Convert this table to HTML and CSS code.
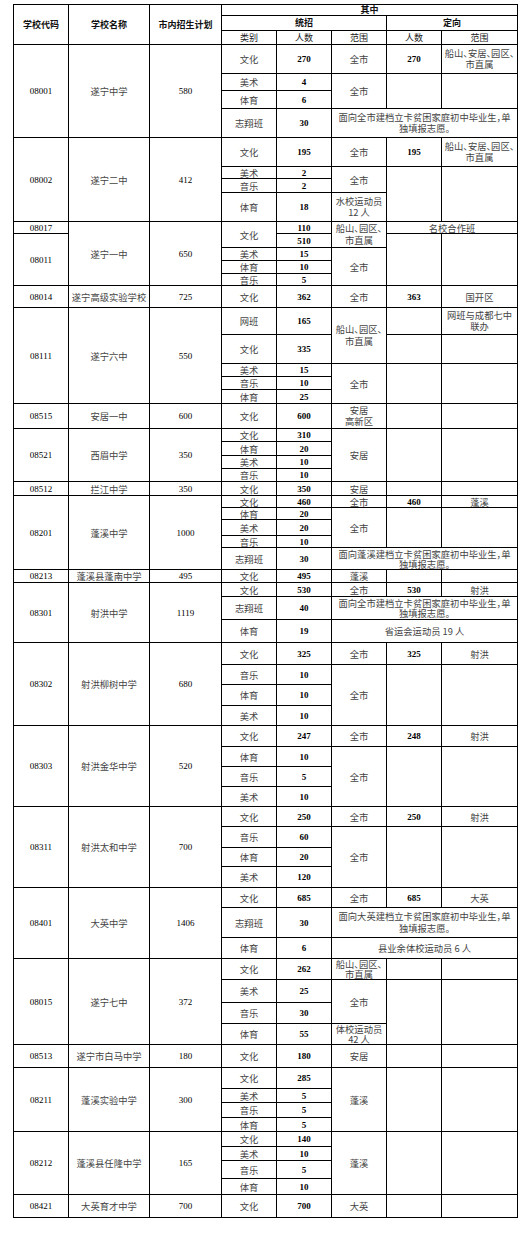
FILE: index.html
```html
<!DOCTYPE html>
<html lang="zh">
<head>
<meta charset="utf-8">
<title>市内招生计划</title>
<link rel="stylesheet" href="styles.css">
</head>
<body>
<table class="plan">
<colgroup>
<col class="w1"><col class="w2"><col class="w3"><col class="w4"><col class="w5"><col class="w6"><col class="w7"><col class="w8">
</colgroup>
<thead>
<tr class="h11"><th rowspan="3">学校代码</th><th rowspan="3">学校名称</th><th rowspan="3">市内招生计划</th><th colspan="5">其中</th></tr>
<tr class="h15"><th colspan="3">统招</th><th colspan="2">定向</th></tr>
<tr class="h14"><th class="sub">类别</th><th class="sub">人数</th><th class="sub">范围</th><th class="sub">人数</th><th class="sub">范围</th></tr>
</thead>
<tbody>
<tr class="h29"><td rowspan="4" class="c">08001</td><td rowspan="4">遂宁中学</td><td rowspan="4" class="c">580</td><td>文化</td><td class="n">270</td><td>全市</td><td class="n">270</td><td class="wrap">船山、安居、园区、市直属</td></tr>
<tr class="h17"><td>美术</td><td class="n">4</td><td rowspan="2">全市</td><td rowspan="2"></td><td rowspan="2"></td></tr>
<tr class="h18"><td>体育</td><td class="n">6</td></tr>
<tr class="h29"><td>志翔班</td><td class="n">30</td><td colspan="3" class="wrap pad4">面向全市建档立卡贫困家庭初中毕业生，单独填报志愿。</td></tr>

<tr class="h29"><td rowspan="4" class="c">08002</td><td rowspan="4">遂宁二中</td><td rowspan="4" class="c">412</td><td>文化</td><td class="n">195</td><td>全市</td><td class="n">195</td><td class="wrap">船山、安居、园区、市直属</td></tr>
<tr class="h12"><td>美术</td><td class="n">2</td><td rowspan="2">全市</td><td rowspan="3"></td><td rowspan="3"></td></tr>
<tr class="h14"><td>音乐</td><td class="n">2</td></tr>
<tr class="h29"><td>体育</td><td class="n">18</td><td class="wrap">水校运动员12 人</td></tr>

<tr class="h12"><td class="c">08017</td><td rowspan="5">遂宁一中</td><td rowspan="5" class="c">650</td><td rowspan="2">文化</td><td class="n">110</td><td rowspan="2" class="wrap">船山、园区、市直属</td><td colspan="2">名校合作班</td></tr>
<tr class="h14"><td rowspan="4" class="c">08011</td><td class="n">510</td><td rowspan="4"></td><td rowspan="4"></td></tr>
<tr class="h13"><td>美术</td><td class="n">15</td><td rowspan="3">全市</td></tr>
<tr class="h13"><td>体育</td><td class="n">10</td></tr>
<tr class="h12"><td>音乐</td><td class="n">5</td></tr>

<tr class="h22"><td class="c">08014</td><td>遂宁高级实验学校</td><td class="c">725</td><td>文化</td><td class="n">362</td><td>全市</td><td class="n">363</td><td>国开区</td></tr>

<tr class="h27"><td rowspan="5" class="c">08111</td><td rowspan="5">遂宁六中</td><td rowspan="5" class="c">550</td><td>网班</td><td class="n">165</td><td rowspan="2" class="wrap">船山、园区、市直属</td><td></td><td class="wrap pad4">网班与成都七中联办</td></tr>
<tr class="h29"><td>文化</td><td class="n">335</td><td></td><td></td></tr>
<tr class="h13"><td>美术</td><td class="n">15</td><td rowspan="3">全市</td><td rowspan="3"></td><td rowspan="3"></td></tr>
<tr class="h13"><td>音乐</td><td class="n">10</td></tr>
<tr class="h14"><td>体育</td><td class="n">25</td></tr>

<tr class="h25"><td class="c">08515</td><td>安居一中</td><td class="c">600</td><td>文化</td><td class="n">600</td><td class="wrap keep pad5">安居 高新区</td><td></td><td></td></tr>

<tr class="h13"><td rowspan="4" class="c">08521</td><td rowspan="4">西眉中学</td><td rowspan="4" class="c">350</td><td>文化</td><td class="n">310</td><td rowspan="4">安居</td><td rowspan="4"></td><td rowspan="4"></td></tr>
<tr class="h14"><td>体育</td><td class="n">20</td></tr>
<tr class="h13"><td>美术</td><td class="n">10</td></tr>
<tr class="h13"><td>音乐</td><td class="n">10</td></tr>

<tr class="h14"><td class="c">08512</td><td>拦江中学</td><td class="c">350</td><td>文化</td><td class="n">350</td><td>安居</td><td></td><td></td></tr>

<tr class="h12"><td rowspan="5" class="c">08201</td><td rowspan="5">蓬溪中学</td><td rowspan="5" class="c">1000</td><td>文化</td><td class="n">460</td><td>全市</td><td class="n">460</td><td>蓬溪</td></tr>
<tr class="h12"><td>体育</td><td class="n">20</td><td rowspan="3">全市</td><td rowspan="3"></td><td rowspan="3"></td></tr>
<tr class="h16"><td>美术</td><td class="n">20</td></tr>
<tr class="h12"><td>音乐</td><td class="n">10</td></tr>
<tr class="h22"><td>志翔班</td><td class="n">30</td><td colspan="3" class="wrap pad4 t">面向蓬溪建档立卡贫困家庭初中毕业生，单独填报志愿。</td></tr>

<tr class="h13"><td class="c">08213</td><td>蓬溪县蓬南中学</td><td class="c">495</td><td>文化</td><td class="n">495</td><td>蓬溪</td><td></td><td></td></tr>

<tr class="h14"><td rowspan="3" class="c">08301</td><td rowspan="3">射洪中学</td><td rowspan="3" class="c">1119</td><td>文化</td><td class="n">530</td><td>全市</td><td class="n">530</td><td>射洪</td></tr>
<tr class="h23"><td>志翔班</td><td class="n">40</td><td colspan="3" class="wrap pad4 t">面向全市建档立卡贫困家庭初中毕业生，单独填报志愿。</td></tr>
<tr class="h23"><td>体育</td><td class="n">19</td><td colspan="3">省运会运动员 19 人</td></tr>

<tr class="h22"><td rowspan="4" class="c">08302</td><td rowspan="4">射洪柳树中学</td><td rowspan="4" class="c">680</td><td>文化</td><td class="n">325</td><td>全市</td><td class="n">325</td><td>射洪</td></tr>
<tr class="h20"><td>音乐</td><td class="n">10</td><td rowspan="3">全市</td><td rowspan="3"></td><td rowspan="3"></td></tr>
<tr class="h21"><td>体育</td><td class="n">10</td></tr>
<tr class="h20"><td>美术</td><td class="n">10</td></tr>

<tr class="h21"><td rowspan="4" class="c">08303</td><td rowspan="4">射洪金华中学</td><td rowspan="4" class="c">520</td><td>文化</td><td class="n">247</td><td>全市</td><td class="n">248</td><td>射洪</td></tr>
<tr class="h20"><td>体育</td><td class="n">10</td><td rowspan="3">全市</td><td rowspan="3"></td><td rowspan="3"></td></tr>
<tr class="h20"><td>音乐</td><td class="n">5</td></tr>
<tr class="h20"><td>美术</td><td class="n">10</td></tr>

<tr class="h20"><td rowspan="4" class="c">08311</td><td rowspan="4">射洪太和中学</td><td rowspan="4" class="c">700</td><td>文化</td><td class="n">250</td><td>全市</td><td class="n">250</td><td>射洪</td></tr>
<tr class="h21"><td>音乐</td><td class="n">60</td><td rowspan="3">全市</td><td rowspan="3"></td><td rowspan="3"></td></tr>
<tr class="h19"><td>体育</td><td class="n">20</td></tr>
<tr class="h21"><td>美术</td><td class="n">120</td></tr>

<tr class="h20"><td rowspan="3" class="c">08401</td><td rowspan="3">大英中学</td><td rowspan="3" class="c">1406</td><td>文化</td><td class="n">685</td><td>全市</td><td class="n">685</td><td>大英</td></tr>
<tr class="h30"><td>志翔班</td><td class="n">30</td><td colspan="3" class="wrap pad4">面向大英建档立卡贫困家庭初中毕业生，单独填报志愿。</td></tr>
<tr class="h21"><td>体育</td><td class="n">6</td><td colspan="3">县业余体校运动员 6 人</td></tr>

<tr class="h21"><td rowspan="4" class="c">08015</td><td rowspan="4">遂宁七中</td><td rowspan="4" class="c">372</td><td>文化</td><td class="n">262</td><td class="wrap t">船山、园区、市直属</td><td></td><td></td></tr>
<tr class="h23"><td>美术</td><td class="n">25</td><td rowspan="2">全市</td><td rowspan="3"></td><td rowspan="3"></td></tr>
<tr class="h21"><td>音乐</td><td class="n">30</td></tr>
<tr class="h21"><td>体育</td><td class="n">55</td><td class="wrap t">体校运动员42 人</td></tr>

<tr class="h23"><td class="c">08513</td><td>遂宁市白马中学</td><td class="c">180</td><td>文化</td><td class="n">180</td><td>安居</td><td></td><td></td></tr>

<tr class="h21"><td rowspan="4" class="c">08211</td><td rowspan="4">蓬溪实验中学</td><td rowspan="4" class="c">300</td><td>文化</td><td class="n">285</td><td rowspan="4">蓬溪</td><td rowspan="4"></td><td rowspan="4"></td></tr>
<tr class="h14"><td>美术</td><td class="n">5</td></tr>
<tr class="h15"><td>音乐</td><td class="n">5</td></tr>
<tr class="h14"><td>体育</td><td class="n">5</td></tr>

<tr class="h15"><td rowspan="4" class="c">08212</td><td rowspan="4">蓬溪县任隆中学</td><td rowspan="4" class="c">165</td><td>文化</td><td class="n">140</td><td rowspan="4">蓬溪</td><td rowspan="4"></td><td rowspan="4"></td></tr>
<tr class="h14"><td>美术</td><td class="n">10</td></tr>
<tr class="h18"><td>音乐</td><td class="n">5</td></tr>
<tr class="h16"><td>体育</td><td class="n">10</td></tr>

<tr class="h23"><td class="c">08421</td><td>大英育才中学</td><td class="c">700</td><td>文化</td><td class="n">700</td><td>大英</td><td></td><td></td></tr>
</tbody>
</table>
</body>
</html>
```

FILE: styles.css
```css
html, body {
  margin: 0;
  background: #fff;
}
body {
  padding: 4px 0 0 13px;
}
.plan {
  border-collapse: collapse;
  table-layout: fixed;
  width: 504px;
}
.w1 { width: 55px; }
.w2 { width: 81px; }
.w3 { width: 72px; }
.w4 { width: 55px; }
.w5 { width: 55px; }
.w6 { width: 55px; }
.w7 { width: 55px; }
.w8 { width: 76px; }

.plan th,
.plan td {
  border: 1px solid #000;
  padding: 0;
  text-align: center;
  vertical-align: middle;
  font-family: "Noto Sans CJK SC", sans-serif;
  font-feature-settings: "halt";
  font-size: 9.3px;
  line-height: 10px;
  color: #444;
  white-space: nowrap;
}
.plan th {
  font-weight: bold;
  color: #111;
  font-size: 9px;
}
.plan th.sub {
  font-weight: normal;
  color: #222;
}
.plan td.n {
  font-family: "Liberation Serif", serif;
  font-weight: bold;
  font-size: 9px;
  color: #000;
}
.plan td.c {
  font-family: "Liberation Serif", serif;
  font-size: 9px;
  color: #000;
}
.plan td.wrap {
  white-space: normal;
  line-height: 11.5px;
}
.plan td.t { line-height: 10px; }
.plan td.pad4 { padding: 0 4px; }
.plan td.pad5 { padding: 0 5px; }
.plan td.keep { word-break: keep-all; }

.h11 { height: 11px; }
.h12 { height: 12px; }
.h13 { height: 13px; }
.h14 { height: 14px; }
.h15 { height: 15px; }
.h16 { height: 16px; }
.h17 { height: 17px; }
.h18 { height: 18px; }
.h19 { height: 19px; }
.h20 { height: 20px; }
.h21 { height: 21px; }
.h22 { height: 22px; }
.h23 { height: 23px; }
.h25 { height: 25px; }
.h27 { height: 27px; }
.h29 { height: 29px; }
.h30 { height: 30px; }
```
